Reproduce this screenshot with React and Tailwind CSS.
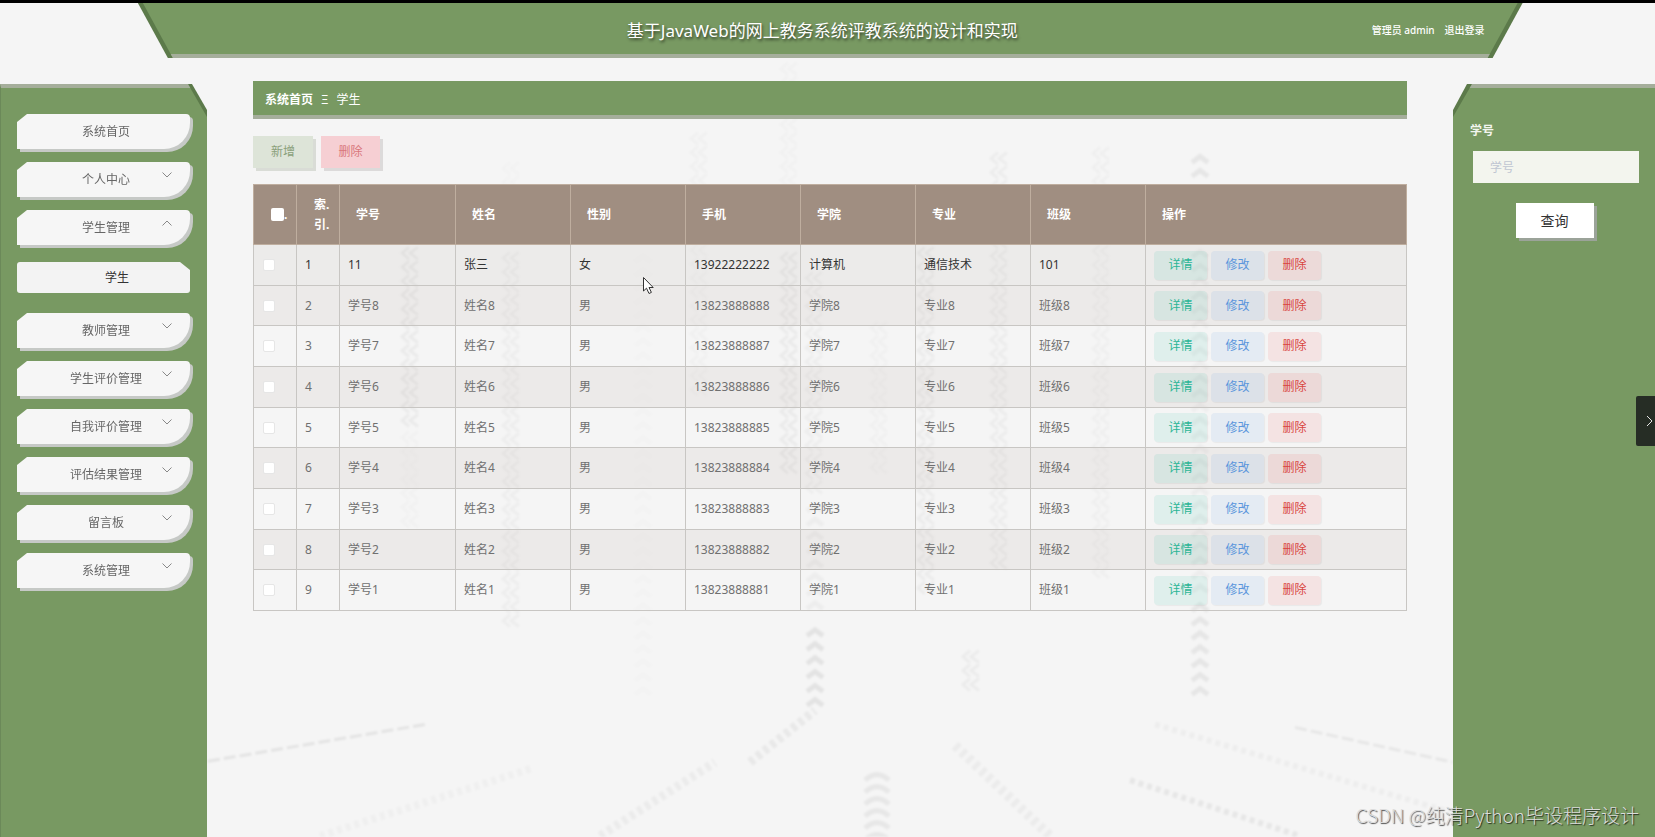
import React from "react";

const MENU_TOP = [
  { label: "系统首页", arrow: null },
  { label: "个人中心", arrow: "down" },
  { label: "学生管理", arrow: "up" },
];

const MENU_BOTTOM = [
  { label: "教师管理", arrow: "down" },
  { label: "学生评价管理", arrow: "down" },
  { label: "自我评价管理", arrow: "down" },
  { label: "评估结果管理", arrow: "down" },
  { label: "留言板", arrow: "down" },
  { label: "系统管理", arrow: "down" },
];

const COLUMNS = ["学号", "姓名", "性别", "手机", "学院", "专业", "班级"];

const ROWS = [
  ["11", "张三", "女", "13922222222", "计算机", "通信技术", "101"],
  ["学号8", "姓名8", "男", "13823888888", "学院8", "专业8", "班级8"],
  ["学号7", "姓名7", "男", "13823888887", "学院7", "专业7", "班级7"],
  ["学号6", "姓名6", "男", "13823888886", "学院6", "专业6", "班级6"],
  ["学号5", "姓名5", "男", "13823888885", "学院5", "专业5", "班级5"],
  ["学号4", "姓名4", "男", "13823888884", "学院4", "专业4", "班级4"],
  ["学号3", "姓名3", "男", "13823888883", "学院3", "专业3", "班级3"],
  ["学号2", "姓名2", "男", "13823888882", "学院2", "专业2", "班级2"],
  ["学号1", "姓名1", "男", "13823888881", "学院1", "专业1", "班级1"],
];

const ACTIONS = [
  { label: "详情", style: "bg-[#1abc9c]/10 text-[#2bb596]" },
  { label: "修改", style: "bg-[#4a90e2]/10 text-[#5b96dc]" },
  { label: "删除", style: "bg-[#f04848]/10 text-[#d9453f]" },
];

// Columns of arrows: x, first y, last y, direction, opacity
const STREAMS = [
  [411, 245, 430, "left", 0.045],
  [411, 430, 530, "left", 0.015],
  [512, 160, 250, "left", 0.012],
  [512, 250, 640, "left", 0.03],
  [643, 250, 700, "up", 0.008],
  [700, 130, 400, "left", 0.018],
  [790, 60, 250, "left", 0.014],
  [790, 250, 475, "left", 0.045],
  [815, 270, 500, "left", 0.03],
  [815, 500, 625, "up", 0.03],
  [815, 625, 710, "up", 0.07],
  [880, 320, 480, "left", 0.018],
  [927, 245, 600, "left", 0.04],
  [1000, 150, 570, "left", 0.035],
  [972, 650, 705, "left", 0.04],
  [1102, 145, 590, "left", 0.022],
  [1200, 150, 180, "up", 0.06],
  [1200, 245, 600, "up", 0.03],
  [1200, 600, 705, "up", 0.06],
];

// Arrow trails over the floor: x1, y1, x2, y2, opacity, width
const TRAILS = [
  [208, 761, 425, 724, 0.07, 3],
  [320, 836, 532, 768, 0.025, 8],
  [600, 836, 715, 762, 0.04, 9],
  [750, 762, 815, 710, 0.05, 9],
  [955, 745, 1050, 836, 0.04, 10],
  [1130, 780, 1300, 836, 0.06, 6],
  [1155, 724, 1450, 812, 0.03, 6],
  [1295, 727, 1453, 762, 0.06, 3],
];

const ARROW_PATH = {
  left: "M7 -6 L-1 0 L7 6 M-2 -6 L-9 0 L-2 6",
  right: "M-7 -6 L1 0 L-7 6 M2 -6 L9 0 L2 6",
  up: "M-8 4 L0 -2 L8 4",
};

function Backdrop() {
  return (
    <svg
      className="absolute inset-0 h-full w-full blur-[1px]"
      viewBox="0 0 1655 837"
      preserveAspectRatio="none"
      fill="none"
      stroke="#000"
      aria-hidden="true"
    >
      {STREAMS.map(([x, y1, y2, dir, opacity], i) => (
        <g key={i} opacity={opacity} strokeWidth={dir === "up" ? 5 : 3}>
          {Array.from({ length: Math.floor((y2 - y1) / 14) }, (_, n) => (
            <path key={n} d={ARROW_PATH[dir]} transform={`translate(${x} ${y1 + n * 14 + 6})`} />
          ))}
        </g>
      ))}
      {TRAILS.map(([x1, y1, x2, y2, opacity, width], i) => (
        <path
          key={i}
          d={`M${x1} ${y1} L${x2} ${y2}`}
          opacity={opacity}
          strokeWidth={width}
          strokeDasharray={width > 5 ? "5 4" : "12 4"}
        />
      ))}
      <g opacity="0.055" strokeWidth="5">
        {[0, 1, 2, 3, 4, 5].map((n) => (
          <path key={n} d="M-12 5 Q0 -6 12 5" transform={`translate(877 ${775 + n * 12})`} />
        ))}
      </g>
    </svg>
  );
}

function Chevron({ dir, className }) {
  return (
    <svg className={className} viewBox="0 0 10 6" fill="none" stroke="currentColor" aria-hidden="true">
      <path d={dir === "up" ? "M0.5 5.5 L5 1 L9.5 5.5" : "M0.5 0.5 L5 5 L9.5 0.5"} />
    </svg>
  );
}

function MenuItem({ label, arrow }) {
  return (
    <li className="relative drop-shadow-[3px_3px_0_#c6c9c6]">
      <button
        type="button"
        className="block h-[35px] w-full rounded-tr-[4px] rounded-br-[26px] bg-[#f6f6f6] pt-px pl-[5px] text-center text-xs text-[#666] [clip-path:polygon(10px_0,100%_0,100%_100%,0_100%,0_8px)]"
      >
        {label}
      </button>
      {arrow && (
        <Chevron dir={arrow} className="pointer-events-none absolute top-[10px] right-[18px] h-[6px] w-[10px] text-[#888]" />
      )}
    </li>
  );
}

function Sidebar() {
  return (
    <aside className="mt-[26px] w-[207px] shrink-0 bg-[#5c7a4a] [clip-path:polygon(0_0,calc(100%-15px)_0,100%_26px,100%_100%,0_100%)]">
      <nav className="h-full border-t-4 border-l border-t-[#a5ae9b] border-l-[#6b8959] bg-[#789962] pr-[17px] pl-4 pt-[26px] [clip-path:polygon(0_0,calc(100%-19px)_0,100%_33px,100%_100%,0_100%)]">
        <ul className="flex flex-col gap-[13px]">
          {MENU_TOP.map((item) => (
            <MenuItem key={item.label} {...item} />
          ))}
        </ul>
        <button
          type="button"
          className="mt-[17px] mb-5 block h-[31px] w-full rounded-[3px] bg-[#f3f3f3] pl-[27px] text-center text-xs text-[#333] [clip-path:polygon(0_0,calc(100%-10px)_0,100%_8px,100%_100%,0_100%)]"
        >
          学生
        </button>
        <ul className="flex flex-col gap-[13px]">
          {MENU_BOTTOM.map((item) => (
            <MenuItem key={item.label} {...item} />
          ))}
        </ul>
      </nav>
    </aside>
  );
}

function SearchPanel() {
  return (
    <aside className="mt-[26px] w-[202px] shrink-0 bg-[#5c7a4a] [clip-path:polygon(14px_0,100%_0,100%_100%,0_100%,0_26px)]">
      <form className="flex h-full flex-col border-t-4 border-[#a5ae9b] bg-[#789962] pr-4 pl-[17px] pt-[34px] [clip-path:polygon(19px_0,100%_0,100%_100%,0_100%,0_33px)]">
        <label htmlFor="studentNo" className="text-xs leading-[18px] font-bold text-[#f2f5ee]">
          学号
        </label>
        <input
          id="studentNo"
          type="text"
          placeholder="学号"
          className="mt-[11px] ml-[3px] h-8 bg-[#f3f5ee] px-[17px] text-xs outline-none placeholder:text-[#bfc6d2]"
        />
        <button
          type="button"
          className="mt-5 h-[35px] w-[78px] self-center bg-white text-sm text-[#333] shadow-[3px_3px_0_#9ba399]"
        >
          查询
        </button>
      </form>
    </aside>
  );
}

function StudentTable() {
  return (
    <table className="mt-4 w-full table-fixed border-collapse border border-[#c8c6c3] text-xs">
      <colgroup>
        <col className="w-[43px]" />
        <col className="w-[43px]" />
        <col className="w-[116px]" />
        {COLUMNS.slice(1).map((c) => (
          <col key={c} className="w-[115px]" />
        ))}
        <col />
      </colgroup>
      <thead className="bg-[#a08e81] text-left leading-5 text-white">
        <tr className="h-[60px]">
          <th className="border border-[#bfae9f] p-0 pl-[17px]">
            <div className="flex items-center">
              <input
                type="checkbox"
                aria-label="全选"
                className="h-[13px] w-[13px] appearance-none rounded-[2px] bg-white"
              />
              .
            </div>
          </th>
          <th className="border border-[#bfae9f] p-0 pl-[17px]">
            索.
            <br />
            引.
          </th>
          {COLUMNS.map((c) => (
            <th key={c} className="border border-[#bfae9f] p-0 pl-4">
              {c}
            </th>
          ))}
          <th className="border border-[#bfae9f] p-0 pl-4">操作</th>
        </tr>
      </thead>
      <tbody className="text-[#707070]">
        {ROWS.map((row, i) => (
          <tr
            key={i}
            className="h-[41px] first:bg-[#8a8078]/8 first:text-[#333] even:bg-[#8a7468]/8 [&:nth-child(3n+2)]:h-10"
          >
            <td className="border border-[#c8c6c3] p-0 pl-[9px]">
              <input
                type="checkbox"
                aria-label={`选择第${i + 1}行`}
                className="block h-3 w-3 appearance-none rounded-[2px] border border-[#e6e6e6] bg-white"
              />
            </td>
            <td className="border border-[#c8c6c3] p-0 pl-2">{i + 1}</td>
            {row.map((cell, n) => (
              <td key={n} className="border border-[#c8c6c3] p-0 pl-2">
                {cell}
              </td>
            ))}
            <td className="border border-[#c8c6c3] p-0 pl-2">
              <div className="flex gap-1">
                {ACTIONS.map((a) => (
                  <button
                    key={a.label}
                    type="button"
                    className={`${a.style} h-[29px] w-[53px] rounded-[4px] shadow-[1px_1px_1px_rgba(0,0,0,0.05)]`}
                  >
                    {a.label}
                  </button>
                ))}
              </div>
            </td>
          </tr>
        ))}
      </tbody>
    </table>
  );
}

export default function App() {
  return (
    <div className="relative flex min-h-screen flex-col overflow-hidden border-t-[3px] border-black bg-[#f5f5f5] font-['Noto_Sans','Noto_Sans_CJK_SC',sans-serif]">
      <Backdrop />

      <header className="relative mr-[8%] ml-[8.33%] h-[55px] bg-[#5c7a4a] [clip-path:polygon(0_0,100%_0,calc(100%-30px)_100%,30px_100%)]">
        <div className="mx-[5px] grid h-full grid-cols-[1fr_auto_1fr] items-center border-b-4 border-[#a5ae9b] bg-[#789962] px-[33px] [clip-path:polygon(0_0,100%_0,calc(100%-30px)_100%,30px_100%)]">
          <h1 className="col-start-2 mr-4 pt-1 text-[17px] text-white [text-shadow:1px_2px_3px_rgba(0,0,0,0.6)]">
            基于JavaWeb的网上教务系统评教系统的设计和实现
          </h1>
          <div className="flex justify-end gap-[10px] pt-1 text-[10px] font-medium text-white">
            <span>管理员 admin</span>
            <a href="#logout">退出登录</a>
          </div>
        </div>
      </header>

      <div className="relative flex flex-1">
        <Sidebar />
        <main className="min-w-0 flex-1 px-[46px] pt-[23px]">
          <nav className="flex h-[38px] items-center gap-2 border-b-4 border-[#a5ae9b] bg-[#789962] px-3 pt-1 text-xs text-white">
            <a href="#home" className="font-bold">
              系统首页
            </a>
            <span>Ξ</span>
            <span>学生</span>
          </nav>
          <div className="mt-[17px] flex gap-2">
            <button type="button" className="h-8 w-[60px] bg-[#dde4d8] text-xs text-[#8aa07b] shadow-[3px_3px_0_#d9dcd6]">
              新增
            </button>
            <button type="button" className="h-8 w-[59px] bg-[#f6cfd3] text-xs text-[#d9777c] shadow-[3px_3px_0_#dcdada]">
              删除
            </button>
          </div>
          <StudentTable />
        </main>
        <SearchPanel />
      </div>

      <button
        type="button"
        aria-label="展开"
        className="absolute top-[393px] right-0 flex h-[50px] w-[19px] items-center justify-end rounded-l-[2px] bg-[#262d25] pr-[2px] text-[#e5e5e5]"
      >
        <svg className="h-3 w-[7px]" viewBox="0 0 7 12" fill="none" stroke="currentColor" aria-hidden="true">
          <path d="M1 1 L6 6 L1 11" />
        </svg>
      </button>

      {/* Mouse pointer */}
      <svg className="absolute top-[274px] left-[643px] h-[18px] w-3" viewBox="0 0 12 18" fill="#fff" stroke="#333" aria-hidden="true">
        <path d="M0.5 0.5 V14 L3.5 11.2 L6 16.5 L8.4 15.4 L6 10.5 H10.2 Z" />
      </svg>

      <p className="absolute right-4 bottom-2 text-[19px] leading-7 font-light text-[#dcdcdc] font-['Noto_Sans_CJK_SC',sans-serif] [text-shadow:1px_1px_1px_rgba(0,0,0,0.7)]">
        CSDN @纯清Python毕设程序设计
      </p>
    </div>
  );
}
